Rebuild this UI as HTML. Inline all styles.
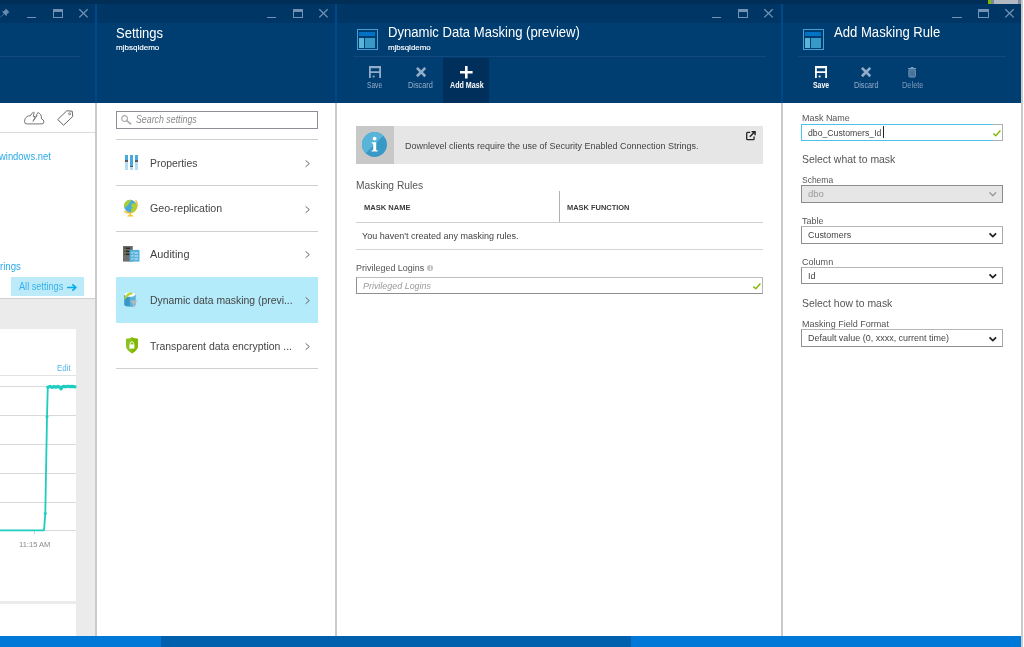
<!DOCTYPE html>
<html><head><meta charset="utf-8"><title>Add Masking Rule</title>
<style>
*{box-sizing:border-box;margin:0;padding:0}
html,body{width:1024px;height:647px;overflow:hidden;background:#fff}
body{font-family:"Liberation Sans",sans-serif;position:relative;color:#333;font-size:12px}
.abs{position:absolute;left:0;top:0;width:1024px;height:647px;overflow:hidden}
.abs *{position:absolute}
.t{white-space:pre;transform-origin:0 50%;display:block;filter:blur(0.35px)}
svg{filter:blur(0.3px)}
svg{overflow:visible}
</style></head><body>
<div class="abs">
<div style="left:0px;top:0px;width:1021px;height:103px;background:#003e71;"></div>
<div style="left:0px;top:0px;width:1021px;height:4px;background:#002e57;"></div>
<div style="left:0px;top:4px;width:1021px;height:19px;background:#003665;"></div>
<div style="left:988px;top:0px;width:3px;height:4px;background:#7fba00;"></div>
<div style="left:991px;top:0px;width:2.5px;height:4px;background:#7a88a0;"></div>
<div style="left:993.5px;top:0px;width:24.5px;height:4px;background:#b4b9c1;"></div>
<div style="left:1018px;top:0px;width:3px;height:4px;background:#7a8aa3;"></div>
<div style="left:95px;top:4px;width:2px;height:99px;background:#004989;"></div>
<div style="left:95px;top:103px;width:2px;height:533px;background:#c9cacc;"></div>
<div style="left:335px;top:4px;width:2px;height:99px;background:#004989;"></div>
<div style="left:335px;top:103px;width:2px;height:533px;background:#c9cacc;"></div>
<div style="left:781px;top:4px;width:1.5px;height:99px;background:#004989;"></div>
<div style="left:781px;top:103px;width:1.5px;height:533px;background:#c9cacc;"></div>
<div style="left:1021px;top:0px;width:1.7px;height:647px;background:#c9cacc;"></div>
<div style="left:0px;top:636px;width:1021px;height:11px;background:#0078d7;"></div>
<div style="left:161px;top:636px;width:470px;height:11px;background:#0060ad;"></div>
<div style="left:26.6px;top:16.5px;width:9.4px;height:1.5px;background:#7291b5"></div>
<div style="left:52.5px;top:9px;width:10.5px;height:9px;border:1px solid #7291b5;border-top-width:3px"></div>
<svg style="left:79.3px;top:9.3px" width="9" height="8.7" viewBox="0 0 9 8.7"><path d="M0.3 0.3L8.7 8.4M8.7 0.3L0.3 8.4" stroke="#7291b5" stroke-width="1.35" fill="none"/></svg>
<div style="left:266.6px;top:16.5px;width:9.4px;height:1.5px;background:#7291b5"></div>
<div style="left:292.5px;top:9px;width:10.5px;height:9px;border:1px solid #7291b5;border-top-width:3px"></div>
<svg style="left:319.3px;top:9.3px" width="9" height="8.7" viewBox="0 0 9 8.7"><path d="M0.3 0.3L8.7 8.4M8.7 0.3L0.3 8.4" stroke="#7291b5" stroke-width="1.35" fill="none"/></svg>
<div style="left:711.6px;top:16.5px;width:9.4px;height:1.5px;background:#7291b5"></div>
<div style="left:737.5px;top:9px;width:10.5px;height:9px;border:1px solid #7291b5;border-top-width:3px"></div>
<svg style="left:764.3px;top:9.3px" width="9" height="8.7" viewBox="0 0 9 8.7"><path d="M0.3 0.3L8.7 8.4M8.7 0.3L0.3 8.4" stroke="#7291b5" stroke-width="1.35" fill="none"/></svg>
<div style="left:952.4px;top:16.5px;width:9.4px;height:1.5px;background:#7291b5"></div>
<div style="left:978.3px;top:9px;width:10.5px;height:9px;border:1px solid #7291b5;border-top-width:3px"></div>
<svg style="left:1005.1px;top:9.3px" width="9" height="8.7" viewBox="0 0 9 8.7"><path d="M0.3 0.3L8.7 8.4M8.7 0.3L0.3 8.4" stroke="#7291b5" stroke-width="1.35" fill="none"/></svg>
<svg style="left:0;top:8px" width="10" height="10" viewBox="0 0 10 10"><path d="M5.8 0.6L9.6 4.4L8.4 4.7L6.8 6.3L6.6 8.2L4.2 5.9L0.6 9.6L0.2 9.3L3.9 5.6L1.8 3.5L3.6 3.3L5.4 1.7Z" fill="#6a8bb0"/></svg>
<div style="left:0px;top:56px;width:80px;height:1px;background:#12487f;"></div>
<span class="t" style="left:116.00px;top:25px;font-size:15px;line-height:15px;color:#fff;transform:scaleX(0.8671);">Settings</span>
<span class="t" style="left:116.00px;top:44px;font-size:8px;line-height:8px;color:#fff;transform:scaleX(1.0037);-webkit-text-stroke:0.15px #fff;">mjbsqldemo</span>
<div style="left:356.5px;top:29px;width:21px;height:21px;border:1px solid #4aa0d4;background:#003e71"></div>
<div style="left:359.0px;top:31.5px;width:16px;height:4.5px;background:#0072c6;"></div>
<div style="left:359.0px;top:37.5px;width:4.5px;height:10px;background:#59b4d9;"></div>
<div style="left:364.5px;top:37.5px;width:10.5px;height:10px;background:#3999c6;"></div>
<span class="t" style="left:388.30px;top:25px;font-size:14px;line-height:14px;color:#fff;transform:scaleX(0.9342);">Dynamic Data Masking (preview)</span>
<span class="t" style="left:388.30px;top:44px;font-size:8px;line-height:8px;color:#fff;transform:scaleX(0.9898);-webkit-text-stroke:0.15px #fff;">mjbsqldemo</span>
<div style="left:352.5px;top:56px;width:413.5px;height:1px;background:#12487f;"></div>
<div style="left:802.5px;top:29px;width:21px;height:21px;border:1px solid #4aa0d4;background:#003e71"></div>
<div style="left:805.0px;top:31.5px;width:16px;height:4.5px;background:#0072c6;"></div>
<div style="left:805.0px;top:37.5px;width:4.5px;height:10px;background:#59b4d9;"></div>
<div style="left:810.5px;top:37.5px;width:10.5px;height:10px;background:#3999c6;"></div>
<span class="t" style="left:834.00px;top:25px;font-size:14px;line-height:14px;color:#fff;transform:scaleX(0.9355);">Add Masking Rule</span>
<div style="left:798px;top:56px;width:208px;height:1px;background:#12487f;"></div>
<div style="left:443.4px;top:57.5px;width:45.4px;height:45.5px;background:#002f5c;"></div>
<svg style="left:369px;top:66.3px" width="12" height="12" viewBox="0 0 12 12"><path d="M0 0H12V12H10.2V6.9H1.8V12H0Z M1.8 2.3V5.2H10.2V2.3Z" fill="#93adc9" fill-rule="evenodd"/><rect x="3.7" y="9.6" width="1.8" height="1.8" fill="#93adc9"/></svg>
<span class="t" style="left:367.30px;top:81px;font-size:8.5px;line-height:8.5px;color:#93adc9;transform:scaleX(0.7794);">Save</span>
<svg style="left:416px;top:67.2px" width="10.2" height="10.2" viewBox="0 0 10 10"><path d="M0.9 0.9L9.1 9.1M9.1 0.9L0.9 9.1" stroke="#93adc9" stroke-width="2.6" fill="none"/></svg>
<span class="t" style="left:408.30px;top:81px;font-size:8.5px;line-height:8.5px;color:#93adc9;transform:scaleX(0.8642);">Discard</span>
<svg style="left:459.9px;top:66.4px" width="12.6" height="12.6" viewBox="0 0 12.6 12.6"><path d="M6.3 0V12.6M0 6.3H12.6" stroke="#fff" stroke-width="2.6" fill="none"/></svg>
<span class="t" style="left:449.60px;top:81px;font-size:8.5px;line-height:8.5px;color:#fff;font-weight:700;transform:scaleX(0.8367);">Add Mask</span>
<svg style="left:814.8px;top:66.3px" width="12" height="12" viewBox="0 0 12 12"><path d="M0 0H12V12H10.2V6.9H1.8V12H0Z M1.8 2.3V5.2H10.2V2.3Z" fill="#fff" fill-rule="evenodd"/><rect x="3.7" y="9.6" width="1.8" height="1.8" fill="#fff"/></svg>
<span class="t" style="left:812.70px;top:81px;font-size:8.5px;line-height:8.5px;color:#fff;font-weight:700;transform:scaleX(0.8057);">Save</span>
<svg style="left:861.3px;top:67.2px" width="10.2" height="10.2" viewBox="0 0 10 10"><path d="M0.9 0.9L9.1 9.1M9.1 0.9L0.9 9.1" stroke="#93adc9" stroke-width="2.6" fill="none"/></svg>
<span class="t" style="left:854.30px;top:81px;font-size:8.5px;line-height:8.5px;color:#93adc9;transform:scaleX(0.8503);">Discard</span>
<svg style="left:907.9px;top:67px" width="8.2" height="10.6" viewBox="0 0 8.2 10.6"><path d="M2.8 0H5.4V0.9H8.2V2.1H0V0.9H2.8Z" fill="#7d9bbc"/><path d="M0.9 2.9H7.3V9.2Q7.3 10 6.5 10H1.7Q0.9 10 0.9 9.2Z" fill="#7d9bbc" fill-opacity="0.45" stroke="#7d9bbc" stroke-width="1"/><path d="M3 3.6V9.2M5.2 3.6V9.2" stroke="#7d9bbc" stroke-width="0.7" stroke-opacity="0.7"/></svg>
<span class="t" style="left:901.50px;top:81px;font-size:8.5px;line-height:8.5px;color:#7d9bbc;transform:scaleX(0.8748);">Delete</span>
<div style="left:116px;top:111px;width:202px;height:17.5px;border:1px solid #8c9096;background:#fff"></div>
<svg style="left:120.6px;top:115.2px" width="10.5" height="9.6" viewBox="0 0 10.5 9.6"><circle cx="3.6" cy="3.6" r="2.9" fill="none" stroke="#aaa" stroke-width="1.2"/><path d="M5.7 5.6L9.6 8.8" stroke="#aaa" stroke-width="1.7" stroke-linecap="round"/></svg>
<span class="t" style="left:135.50px;top:114px;font-size:10.5px;line-height:10.5px;color:#8a8a8a;font-style:italic;transform:scaleX(0.8387);">Search settings</span>
<div style="left:116px;top:139px;width:201.5px;height:1px;background:#cfcfcf;"></div>
<div style="left:116px;top:185px;width:201.5px;height:1px;background:#cfcfcf;"></div>
<div style="left:116px;top:231px;width:201.5px;height:1px;background:#cfcfcf;"></div>
<div style="left:116px;top:368px;width:201.5px;height:1px;background:#cfcfcf;"></div>
<div style="left:116px;top:276.8px;width:201.5px;height:46px;background:#b3ebfa;"></div>
<span class="t" style="left:149.80px;top:158px;font-size:10.5px;line-height:10.5px;color:#444;transform:scaleX(0.9904);">Properties</span>
<span class="t" style="left:149.80px;top:203px;font-size:10.5px;line-height:10.5px;color:#444;transform:scaleX(1.0140);">Geo-replication</span>
<span class="t" style="left:149.80px;top:249px;font-size:10.5px;line-height:10.5px;color:#444;transform:scaleX(1.0408);">Auditing</span>
<span class="t" style="left:149.80px;top:295px;font-size:10.5px;line-height:10.5px;color:#444;transform:scaleX(0.9893);">Dynamic data masking (previ...</span>
<span class="t" style="left:149.80px;top:341px;font-size:10.5px;line-height:10.5px;color:#444;transform:scaleX(0.9957);">Transparent data encryption ...</span>
<svg style="left:305.2px;top:159.8px" width="5" height="7.2" viewBox="0 0 5 7.2"><path d="M0.6 0.4L4.3 3.6L0.6 6.8" stroke="#666" stroke-width="1" fill="none"/></svg>
<svg style="left:305.2px;top:205.5px" width="5" height="7.2" viewBox="0 0 5 7.2"><path d="M0.6 0.4L4.3 3.6L0.6 6.8" stroke="#666" stroke-width="1" fill="none"/></svg>
<svg style="left:305.2px;top:251.3px" width="5" height="7.2" viewBox="0 0 5 7.2"><path d="M0.6 0.4L4.3 3.6L0.6 6.8" stroke="#666" stroke-width="1" fill="none"/></svg>
<svg style="left:305.2px;top:297.0px" width="5" height="7.2" viewBox="0 0 5 7.2"><path d="M0.6 0.4L4.3 3.6L0.6 6.8" stroke="#666" stroke-width="1" fill="none"/></svg>
<svg style="left:305.2px;top:342.8px" width="5" height="7.2" viewBox="0 0 5 7.2"><path d="M0.6 0.4L4.3 3.6L0.6 6.8" stroke="#666" stroke-width="1" fill="none"/></svg>
<div style="left:125px;top:155px;width:2.7px;height:15.3px;background:#b5dcf0;"></div>
<div style="left:125px;top:155px;width:2.7px;height:5.099999999999994px;background:#4aa8dc;"></div>
<div style="left:124.6px;top:160.1px;width:3.5px;height:1.7px;background:#5a5a5a;"></div>
<div style="left:130.1px;top:155px;width:2.7px;height:15.3px;background:#b5dcf0;"></div>
<div style="left:130.1px;top:155px;width:2.7px;height:10.699999999999989px;background:#4aa8dc;"></div>
<div style="left:129.7px;top:165.7px;width:3.5px;height:1.7px;background:#5a5a5a;"></div>
<div style="left:135.2px;top:155px;width:2.7px;height:15.3px;background:#b5dcf0;"></div>
<div style="left:135.2px;top:155px;width:2.7px;height:5.099999999999994px;background:#4aa8dc;"></div>
<div style="left:134.79999999999998px;top:160.1px;width:3.5px;height:1.7px;background:#5a5a5a;"></div>
<svg style="left:118px;top:195px" width="30" height="30" viewBox="0 0 30 30">
<path d="M17.6 5.2A8 8 0 0 1 6.2 16.2" fill="none" stroke="#fcc226" stroke-width="1.5"/>
<path d="M12.3 18.4V20" stroke="#fcc226" stroke-width="1.6"/><path d="M9 21.5Q9.4 20 12.3 19.8Q15.2 20 15.6 21.5Z" fill="#fcc226"/>
<circle cx="12.3" cy="11.1" r="6.3" fill="#4ba8dc"/>
<path d="M12.6 4.8Q9 4.6 7 7.4Q5.8 9.4 6.1 12L7.6 12.4L8.8 10.6L10.2 10.4L10.4 8.6L12 8.2L11.4 6.8L13.4 6.4Z" fill="#a9d131"/>
<path d="M13.6 9L15 8.2L17.6 8.4Q18.8 10.4 18.4 13Q17.6 16 14.6 17.2L13 17V13.6L15.2 13.2L13.2 11.4Z" fill="#a9d131"/>
</svg>
<svg style="left:123.2px;top:246.2px" width="16.4" height="15.6" viewBox="0 0 16.4 15.6">
<rect x="0" y="0" width="9.8" height="15.6" fill="#6e6e6e"/>
<rect x="1.2" y="1.6" width="6" height="1.3" fill="#222"/><rect x="1.2" y="4.6" width="6" height="1.3" fill="#222"/><rect x="1.2" y="7.6" width="6" height="1.3" fill="#222"/>
<rect x="1.6" y="1.8" width="1.2" height="0.9" fill="#7fba00"/><rect x="1.6" y="4.8" width="1.2" height="0.9" fill="#7fba00"/><rect x="1.6" y="7.8" width="1.2" height="0.9" fill="#7fba00"/>
<rect x="6.6" y="3.9" width="9.9" height="11.7" fill="#55b2dc"/>
<path d="M8.2 6.6l0.8 0.8l1.3-1.6M8.2 9.6l0.8 0.8l1.3-1.6M8.2 12.6l0.8 0.8l1.3-1.6" stroke="#fff" stroke-width="0.7" fill="none"/>
<path d="M11.4 7h3.6M11.4 10h3.6M11.4 13h3.6" stroke="#fff" stroke-width="0.8"/>
</svg>
<svg style="left:124.4px;top:291.8px" width="14" height="16" viewBox="0 0 14 16">
<path d="M0.2 2.6V12.6Q0.2 14.6 5.8 14.6Q11.4 14.6 11.4 12.6V2.6Z" fill="#3999c6"/>
<path d="M5.8 2.6V14.6Q11.4 14.6 11.4 12.6V2.6Z" fill="#59b4d9"/>
<ellipse cx="5.8" cy="2.6" rx="5.6" ry="2.2" fill="#fff"/>
<path d="M0.2 7.6Q0 2.4 6.6 0.2Q8.6 0.2 9 1.8Q3.6 3.4 1.2 7.2Z" fill="#b8d432"/>
<path d="M5.8 8.6H13.6L10.7 11.8V15.6L8.9 14.4V11.8Z" fill="#b8b8b8"/>
</svg>
<svg style="left:125.6px;top:337.3px" width="11.9" height="16.5" viewBox="0 0 11.9 16.5">
<path d="M5.95 0Q4.8 1.5 0 1.7V9.6Q0.4 13 5.95 16.5Q11.5 13 11.9 9.6V1.7Q7.1 1.5 5.95 0Z" fill="#8cc220"/>
<path d="M5.95 0V16.5Q11.5 13 11.9 9.6V1.7Q7.1 1.5 5.95 0Z" fill="#7fba00"/>
<rect x="3.4" y="7.4" width="5" height="4.2" fill="#fff"/>
<path d="M4.2 7.6V6.4Q4.2 4.9 5.9 4.9Q7.6 4.9 7.6 6.4V7.6" fill="none" stroke="#fff" stroke-width="0.9"/>
</svg>
<svg style="left:24px;top:111px" width="21" height="14" viewBox="0 0 21 14">
<path d="M9.4 1.2Q7.2 2.2 6.5 4.8Q4.6 4.4 3 5.6Q0.6 6.8 0.5 10.4Q0.5 12.9 2.8 12.9H17.8Q19.9 12.9 19.9 10.8Q19.9 8.6 17.7 8Q17.9 3 14.2 1.5" fill="none" stroke="#6e6e6e" stroke-width="0.95"/>
<path d="M10.2 0.9L9.3 5.7L11.3 5.4L9 10.4L13.1 4.5L12.2 4.6L14.1 1.3" fill="none" stroke="#6e6e6e" stroke-width="0.9"/>
</svg>
<svg style="left:57px;top:109.5px" width="16.5" height="16" viewBox="0 0 16.5 16">
<path d="M0.7 9.6L9.8 0.8L15.2 1.2L15.8 6.4L6.6 15.2Z" fill="none" stroke="#666" stroke-width="1"/>
<circle cx="12.6" cy="3.8" r="1" fill="none" stroke="#666" stroke-width="0.8"/>
</svg>
<div style="left:0px;top:132.4px;width:95px;height:1px;background:#dcdcdc;"></div>
<span class="t" style="left:-0.60px;top:151px;font-size:10.5px;line-height:10.5px;color:#2aa9e8;transform:scaleX(0.8965);">windows.net</span>
<span class="t" style="left:0.40px;top:261px;font-size:10.5px;line-height:10.5px;color:#2aa9e8;transform:scaleX(0.9181);">rings</span>
<div style="left:11.4px;top:276.6px;width:72.4px;height:19.4px;background:#bdeaf9;"></div>
<span class="t" style="left:19.00px;top:281px;font-size:10.5px;line-height:10.5px;color:#35b2eb;transform:scaleX(0.8724);">All settings</span>
<svg style="left:66.8px;top:283.6px" width="9.6" height="7" viewBox="0 0 9.6 7"><path d="M0 3.5H8.6M5.4 0.4L8.8 3.5L5.4 6.6" stroke="#00abec" stroke-width="1.6" fill="none"/></svg>
<div style="left:0px;top:298px;width:95px;height:338px;background:#ebebeb;"></div>
<div style="left:0px;top:298px;width:95px;height:1px;background:#cfcfcf;"></div>
<div style="left:0px;top:329px;width:76px;height:271.5px;background:#fff;"></div>
<div style="left:0px;top:603.5px;width:76px;height:32.5px;background:#fff;"></div>
<span class="t" style="left:57.20px;top:364px;font-size:9px;line-height:9px;color:#55b3e8;transform:scaleX(0.8830);">Edit</span>
<div style="left:0px;top:375px;width:76px;height:1px;background:#e2e2e2;"></div>
<div style="left:0px;top:386.2px;width:76px;height:1px;background:#d9d9d9;"></div>
<div style="left:0px;top:414.9px;width:76px;height:1px;background:#d9d9d9;"></div>
<div style="left:0px;top:443.8px;width:76px;height:1px;background:#d9d9d9;"></div>
<div style="left:0px;top:472.6px;width:76px;height:1px;background:#d9d9d9;"></div>
<div style="left:0px;top:501.5px;width:76px;height:1px;background:#d9d9d9;"></div>
<div style="left:0px;top:530.3px;width:76px;height:1px;background:#d9d9d9;"></div>
<div style="left:34px;top:531px;width:1px;height:3px;background:#ccc;"></div>
<span class="t" style="left:18.80px;top:541px;font-size:8px;line-height:8px;color:#8a8a8a;transform:scaleX(0.9452);">11:15 AM</span>
<svg style="left:0;top:380px" width="76" height="156" viewBox="0 380 76 156">
<path d="M-1 530.4H44L45.3 513.6L47 416.8L47.8 387.2" fill="none" stroke="#1fcdc0" stroke-width="1.8" stroke-linejoin="round"/>
<path d="M47.8 387.2L50 386.4L52 387.4L54 386.6L56 387.2L58 386.4L60 387.4L61 389L62 387L64 386.4L66 386.8L68 386.2L70 386.6L72 386.4L75 386.8" fill="none" stroke="#1fcdc0" stroke-width="3.2" stroke-linejoin="round" stroke-linecap="round"/>
<circle cx="45.3" cy="513.6" r="1.5" fill="#1fcdc0"/><circle cx="47" cy="416.8" r="1.5" fill="#1fcdc0"/>
</svg>
<div style="left:356px;top:126px;width:407.3px;height:37.6px;background:#e6e6e6;"></div>
<div style="left:356px;top:126px;width:38px;height:37.6px;background:#c8c8c8;"></div>
<svg style="left:362.2px;top:132.2px" width="25" height="25" viewBox="0 0 25 25">
<defs><clipPath id="ic"><circle cx="12.5" cy="12.5" r="12.5"/></clipPath></defs>
<circle cx="12.5" cy="12.5" r="12.5" fill="#3999c6"/>
<path d="M0 0H25L0 25Z" fill="#59b4d9" clip-path="url(#ic)"/>
<circle cx="12.6" cy="6.6" r="1.9" fill="#fff"/>
<path d="M9.8 10.2H14.2V18.2H15.6V19.6H9.6V18.2H11.2V11.6H9.8Z" fill="#fff"/>
</svg>
<span class="t" style="left:404.80px;top:141px;font-size:9.6px;line-height:9.6px;color:#444;transform:scaleX(0.9372);">Downlevel clients require the use of Security Enabled Connection Strings.</span>
<svg style="left:746.2px;top:131.4px" width="9.8" height="9.4" viewBox="0 0 9.8 9.4">
<path d="M4.2 1.4H1.6Q0.7 1.4 0.7 2.3V7.8Q0.7 8.7 1.6 8.7H7.2Q8.1 8.7 8.1 7.8V5.4" fill="none" stroke="#222" stroke-width="1.3"/>
<path d="M3.8 5.8L8.6 1M5.6 0.7H9.1V4.2" fill="none" stroke="#222" stroke-width="1.4"/>
</svg>
<span class="t" style="left:356.30px;top:180px;font-size:11px;line-height:11px;color:#555;transform:scaleX(0.9287);">Masking Rules</span>
<span class="t" style="left:363.60px;top:204px;font-size:8px;line-height:8px;color:#3c3c3c;font-weight:700;transform:scaleX(0.9424);">MASK NAME</span>
<span class="t" style="left:567.00px;top:204px;font-size:8px;line-height:8px;color:#3c3c3c;font-weight:700;transform:scaleX(0.9313);">MASK FUNCTION</span>
<div style="left:559px;top:191.2px;width:1px;height:30.6px;background:#b0b0b0;"></div>
<div style="left:356px;top:222px;width:407.3px;height:1px;background:#cfcfcf;"></div>
<span class="t" style="left:362.20px;top:231px;font-size:9.6px;line-height:9.6px;color:#444;transform:scaleX(0.9382);">You haven&#x27;t created any masking rules.</span>
<div style="left:356px;top:249px;width:407.3px;height:1px;background:#d5d5d5;"></div>
<span class="t" style="left:355.90px;top:263px;font-size:9.6px;line-height:9.6px;color:#555;transform:scaleX(0.9346);">Privileged Logins</span>
<div style="left:427.4px;top:265.2px;width:5.6px;height:5.6px;border-radius:50%;background:#c4c4c4"></div>
<div style="left:429.8px;top:266.3px;width:0.9px;height:0.9px;background:#fff"></div><div style="left:429.8px;top:267.7px;width:0.9px;height:2px;background:#fff"></div>
<div style="left:356px;top:276.5px;width:407.3px;height:17.2px;border:1px solid #8f8f8f;border-top-color:#bdbdbd;border-right-color:#b5b5b5;background:#fff"></div>
<span class="t" style="left:363.40px;top:281px;font-size:9.6px;line-height:9.6px;color:#9a9a9a;font-style:italic;transform:scaleX(0.9305);">Privileged Logins</span>
<svg style="left:752.7px;top:282.7px" width="7.8" height="6.4" viewBox="0 0 7.8 6.4"><path d="M0.4 3.4L2.8 5.8L7.4 0.5" stroke="#7fba00" stroke-width="1.4" fill="none"/></svg>
<span class="t" style="left:801.70px;top:113px;font-size:9.6px;line-height:9.6px;color:#555;transform:scaleX(0.9338);">Mask Name</span>
<div style="left:801.2px;top:123.7px;width:202.2px;height:17.3px;border:1px solid #b0b0b0;background:#fff"></div>
<div style="left:801.2px;top:123.7px;width:192.0px;height:17.3px;border:1.3px solid #4cc2f1;border-right:none;background:#fff"></div>
<span class="t" style="left:808.40px;top:128px;font-size:9.6px;line-height:9.6px;color:#444;transform:scaleX(0.9055);">dbo_Customers_Id</span>
<div style="left:883px;top:126.2px;width:1px;height:12px;background:#222;"></div>
<svg style="left:992.6px;top:129.7px" width="7.8" height="6.4" viewBox="0 0 7.8 6.4"><path d="M0.4 3.4L2.8 5.8L7.4 0.5" stroke="#7fba00" stroke-width="1.4" fill="none"/></svg>
<span class="t" style="left:801.70px;top:154px;font-size:10.6px;line-height:10.6px;color:#555;transform:scaleX(0.9842);">Select what to mask</span>
<span class="t" style="left:801.70px;top:175px;font-size:9.6px;line-height:9.6px;color:#555;transform:scaleX(0.8834);">Schema</span>
<div style="left:801.2px;top:185.2px;width:202.2px;height:17.4px;border:1px solid #8c8c8c;background:#e6e6e6"></div>
<span class="t" style="left:808.40px;top:189px;font-size:9.6px;line-height:9.6px;color:#9a9a9a;transform:scaleX(0.9928);">dbo</span>
<svg style="left:989.3px;top:192.3px" width="7.6" height="4.4" viewBox="0 0 7.6 4.4"><path d="M0.5 0.4L3.8 3.6L7.1 0.4" stroke="#8a8a8a" stroke-width="1.2" fill="none"/></svg>
<span class="t" style="left:801.70px;top:216px;font-size:9.6px;line-height:9.6px;color:#555;transform:scaleX(0.9330);">Table</span>
<div style="left:801.2px;top:226.3px;width:202.2px;height:17.4px;border:1px solid #8f8f8f;border-top-color:#b5b5b5;border-right-color:#aaa;background:#fff"></div>
<span class="t" style="left:808.40px;top:230px;font-size:9.6px;line-height:9.6px;color:#444;transform:scaleX(0.9291);">Customers</span>
<svg style="left:989.3px;top:233.4px" width="7.6" height="4.4" viewBox="0 0 7.6 4.4"><path d="M0.5 0.4L3.8 3.6L7.1 0.4" stroke="#222" stroke-width="1.8" fill="none"/></svg>
<span class="t" style="left:801.70px;top:257px;font-size:9.6px;line-height:9.6px;color:#555;transform:scaleX(0.9437);">Column</span>
<div style="left:801.2px;top:267.1px;width:202.2px;height:17.4px;border:1px solid #8f8f8f;border-top-color:#b5b5b5;border-right-color:#aaa;background:#fff"></div>
<span class="t" style="left:808.40px;top:271px;font-size:9.6px;line-height:9.6px;color:#444;transform:scaleX(0.9481);">Id</span>
<svg style="left:989.3px;top:274.2px" width="7.6" height="4.4" viewBox="0 0 7.6 4.4"><path d="M0.5 0.4L3.8 3.6L7.1 0.4" stroke="#222" stroke-width="1.8" fill="none"/></svg>
<span class="t" style="left:801.70px;top:298px;font-size:10.6px;line-height:10.6px;color:#555;transform:scaleX(0.9830);">Select how to mask</span>
<span class="t" style="left:801.70px;top:319px;font-size:9.6px;line-height:9.6px;color:#555;transform:scaleX(0.9422);">Masking Field Format</span>
<div style="left:801.2px;top:329.4px;width:202.2px;height:17.4px;border:1px solid #8f8f8f;border-top-color:#b5b5b5;border-right-color:#aaa;background:#fff"></div>
<span class="t" style="left:808.40px;top:333px;font-size:9.6px;line-height:9.6px;color:#444;transform:scaleX(0.9338);">Default value (0, xxxx, current time)</span>
<svg style="left:989.3px;top:336.5px" width="7.6" height="4.4" viewBox="0 0 7.6 4.4"><path d="M0.5 0.4L3.8 3.6L7.1 0.4" stroke="#222" stroke-width="1.8" fill="none"/></svg>
</div>
</body></html>
